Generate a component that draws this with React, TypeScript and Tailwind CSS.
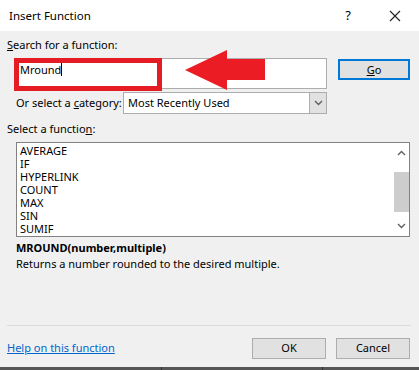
import React from "react";

const functions = ["AVERAGE", "IF", "HYPERLINK", "COUNT", "MAX", "SIN", "SUMIF"];

function Chevron({ up = false }: { up?: boolean }) {
    return (
        <svg width="9" height="6" viewBox="0 0 9 6" className={up ? "rotate-180" : ""}>
            <path d="M1 1 L4.5 4.5 L8 1" fill="none" stroke="#606060" strokeWidth="1.4" />
        </svg>
    );
}

export default function App() {
    return (
        <div
            className="relative w-[419px] h-[370px] overflow-hidden bg-[#f0f0f0] text-[11px] text-black whitespace-nowrap"
            style={{ fontFamily: '"Segoe UI", "Noto Sans", "Open Sans", sans-serif' }}
        >
            {/* title bar */}
            <div className="h-[31px] bg-white flex items-center pl-[9px]">
                <span className="leading-none text-[11.5px]">Insert Function</span>
                <span className="ml-auto text-[13px] leading-none mr-[38px]">?</span>
                <svg width="12" height="12" viewBox="0 0 12 12" className="mr-[18px]">
                    <path d="M1 1 L11 11 M11 1 L1 11" stroke="#222" strokeWidth="1.1" />
                </svg>
            </div>

            <div className="px-[7px]">
                <div className="mt-[6px] h-[16px] leading-[16px]">
                    <u>S</u>earch for a function:
                </div>

                {/* search row */}
                <div className="mt-[5px] flex items-start">
                    <div className="relative ml-[7px] w-[313px] h-[31px] bg-white border border-[#adadad]">
                        <span className="absolute left-[5px] top-[3px] leading-[16px]">
                            Mround<span className="inline-block w-px h-[13px] bg-black align-[-2px]" />
                        </span>
                        {/* red highlight box */}
                        <div className="absolute left-[-1px] top-[-1px] w-[148px] h-[33px] border-[5px] border-[#e51c23]" />
                        {/* red arrow */}
                        <svg
                            width="82"
                            height="40"
                            viewBox="0 0 82 40"
                            className="absolute left-[170px] top-[-9px]"
                        >
                            <polygon points="0,20 42,0 42,9 80,9 80,30 42,30 42,40" fill="#ec1c24" />
                        </svg>
                    </div>
                    <button className="ml-[11px] mt-[1px] w-[72px] h-[21px] bg-[#e1e1e1] border-2 border-[#0078d7] leading-none">
                        <u>G</u>o
                    </button>
                </div>

                {/* category row */}
                <div className="mt-[3px] flex items-center">
                    <span className="ml-[9px] w-[107px]">
                        Or select a <u>c</u>ategory:
                    </span>
                    <div className="flex w-[204px] h-[22px] bg-white border border-[#adadad]">
                        <span className="pl-[4px] leading-[20px] flex-1">Most Recently Used</span>
                        <div className="w-[17px] h-full bg-[#e1e1e1] border-l border-[#adadad] flex items-center justify-center">
                            <Chevron />
                        </div>
                    </div>
                </div>

                <div className="mt-[7px] h-[16px] leading-[16px]">
                    Select a functio<u>n</u>:
                </div>

                {/* function list */}
                <div className="mt-[5px] ml-[9px] w-[394px] h-[95px] bg-white border border-[#828282] flex">
                    <div className="flex-1 pl-[3px] pt-[1px]">
                        {functions.map((f) => (
                            <div key={f} className="h-[13px] leading-[13px]">
                                {f}
                            </div>
                        ))}
                    </div>
                    <div className="w-[16px] flex flex-col items-center">
                        <div className="h-[20px] flex items-center justify-center">
                            <Chevron up />
                        </div>
                        <div className="mt-[9px] w-[15px] h-[40px] bg-[#cdcdcd]" />
                        <div className="mt-auto h-[20px] flex items-center justify-center">
                            <Chevron />
                        </div>
                    </div>
                </div>

                <div className="mt-[3px] ml-[9px] font-bold leading-[16px]">MROUND(number,multiple)</div>
                <div className="ml-[9px] leading-[16px]">Returns a number rounded to the desired multiple.</div>

                <div className="mt-[53px] h-px bg-[#dcdcdc] w-[404px]" />

                {/* bottom row */}
                <div className="mt-[12px] flex items-center">
                    <span className="text-[#0066cc] underline">Help on this function</span>
                    <button className="ml-auto w-[74px] h-[21px] bg-[#e1e1e1] border border-[#adadad]">OK</button>
                    <button className="ml-[10px] mr-[2px] w-[74px] h-[21px] bg-[#e1e1e1] border border-[#adadad]">
                        Cancel
                    </button>
                </div>
            </div>

            {/* taskbar strip at bottom */}
            <div className="absolute left-0 right-0 bottom-0 h-[3px] bg-[#555] flex">
                <div className="ml-[161px] w-px bg-[#333]" />
                <div className="ml-[160px] w-px bg-[#333]" />
            </div>
        </div>
    );
}
